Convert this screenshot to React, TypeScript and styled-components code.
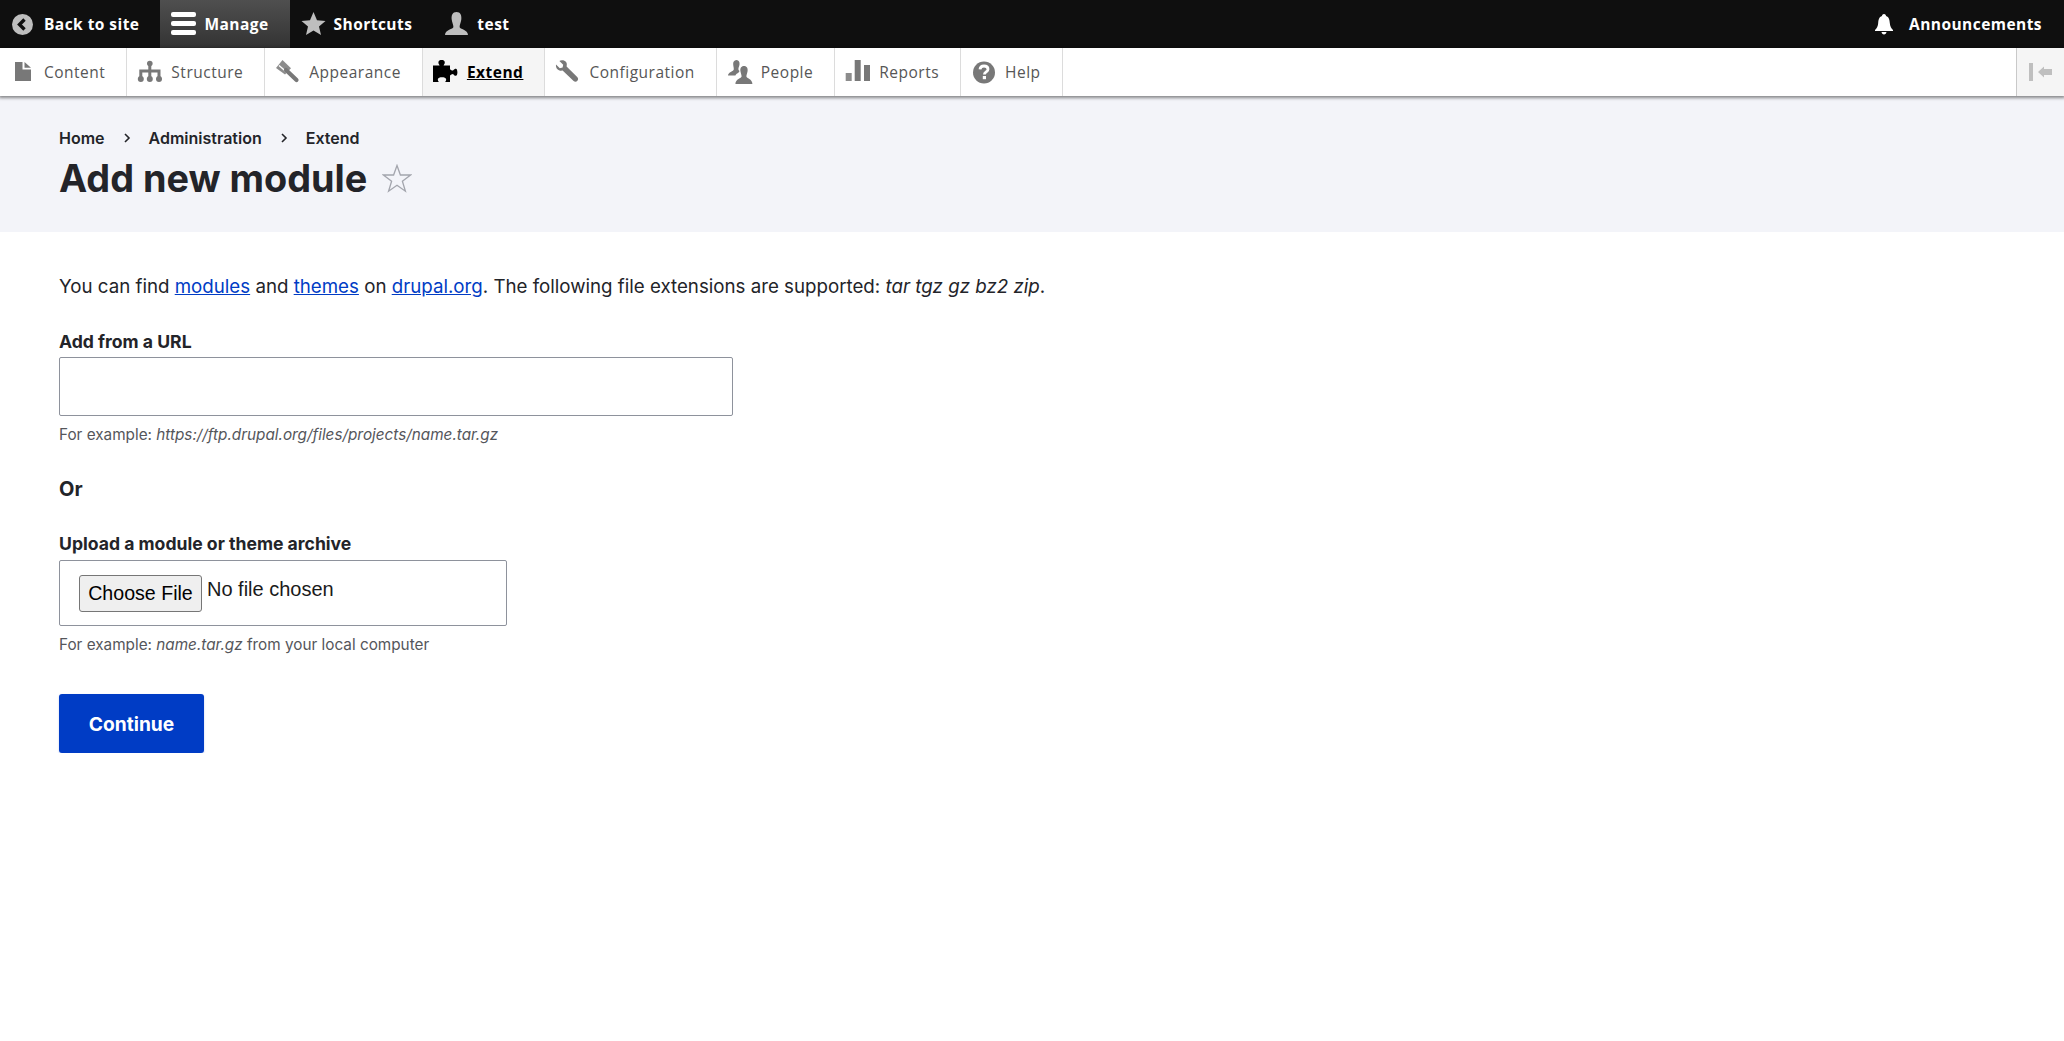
import React from 'react';
import styled, { createGlobalStyle } from 'styled-components';

const GlobalStyle = createGlobalStyle`
  html, body {
    margin: 0;
    padding: 0;
    background: #fff;
  }
  body {
    font-family: Inter, "Liberation Sans", sans-serif;
    color: #232429;
  }
`;

const BackIcon = () => (
  <Icon viewBox="0 0 24 24">
    <circle cx="10.5" cy="12.5" r="10.5" fill="#bebebe" />
    <path d="M12.5 7.5 L7.5 12.5 L12.5 17.5" fill="none" stroke="#0f0f0f" strokeWidth="3.4" />
  </Icon>
);

const ManageIcon = () => (
  <Icon viewBox="0 0 24 24">
    <rect x="-1" y="0" width="25" height="5" rx="2" fill="#fff" />
    <rect x="-1" y="9" width="25" height="5" rx="2" fill="#fff" />
    <rect x="-1" y="18" width="25" height="5" rx="2" fill="#fff" />
  </Icon>
);

const StarIcon = () => (
  <Icon viewBox="0 0 24 24">
    <path d="M11.5 0 L15 8.2 L23.5 8.9 L17 14.6 L19 23 L11.5 18.6 L4 23 L6 14.6 L-0.5 8.9 L8 8.2 Z" fill="#bebebe" />
  </Icon>
);

const UserIcon = () => (
  <Icon viewBox="0 0 24 24">
    <path d="M11.5 0 C15.5 0 16.8 3.5 16.3 7.5 C16 10.5 14.6 12.5 14.6 15 C14.6 17.2 23 17.5 23 23 H0 C0 17.5 8.4 17.2 8.4 15 C8.4 12.5 7 10.5 6.7 7.5 C6.2 3.5 7.5 0 11.5 0 Z" fill="#bebebe" />
  </Icon>
);

const BellIcon = () => (
  <Icon viewBox="0 0 18 24">
    <path d="M9 2 C10.5 2 11 3 11 4 C14 5 14.6 8 14.8 11 C15 14.5 16.4 16.5 18 18 V19 H0 V18 C1.6 16.5 3 14.5 3.2 11 C3.4 8 4 5 7 4 C7 3 7.5 2 9 2 Z" fill="#fff" />
    <path d="M6.5 20 H11.5 C11.3 21.5 10.3 22.4 9 22.4 C7.7 22.4 6.7 21.5 6.5 20 Z" fill="#fff" />
  </Icon>
);

const ContentIcon = () => (
  <Icon viewBox="0 0 24 24">
    <path d="M3 2 H10.5 V9.5 H19 V21 H3 Z" fill="#787878" />
    <path d="M12.5 2 L19 7.8 H12.5 Z" fill="#787878" />
  </Icon>
);

const StructureIcon = () => (
  <Icon viewBox="0 0 24 24">
    <circle cx="10.8" cy="3.5" r="2.8" fill="#787878" />
    <path d="M10.8 4 V19 M1.8 19 V11 H20 V19" fill="none" stroke="#787878" strokeWidth="3" />
    <circle cx="1.8" cy="19" r="3" fill="#787878" />
    <circle cx="10.8" cy="19" r="3" fill="#787878" />
    <circle cx="20" cy="19" r="3" fill="#787878" />
  </Icon>
);

const AppearanceIcon = () => (
  <Icon viewBox="0 0 24 24">
    <path d="M5.5 0 L14 8.2 L8 14.5 L-1 8 Z" fill="#8c8c8c" />
    <path d="M2 5.5 L9.5 12" stroke="#fff" strokeWidth="1.4" />
    <path d="M9 10 L19.5 20" stroke="#787878" strokeWidth="4.2" strokeLinecap="round" />
  </Icon>
);

const ExtendIcon = () => (
  <Icon viewBox="0 0 24 24">
    <path d="M-2 5.5 H4.6 C4.2 4.6 3.4 3.9 3.4 2.6 C3.4 0.6 5 0 6.6 0 C8.2 0 9.8 0.6 9.8 2.6 C9.8 3.9 9 4.6 8.6 5.5 H15 V9.2 C16 9.8 16.6 10.6 18 10.6 C19 9.2 20 8.8 20.8 8.8 C22 8.8 22.4 11 22.4 12.4 C22.4 13.8 22 15.8 20.8 15.8 C20 15.8 19 15.4 18 14 C16.6 14 16 14.8 15 15.4 V22 H10.2 C10.8 20.8 11.2 20.2 11.2 19.4 C11.2 17.8 9 17.2 7 17.2 C5 17.2 2.8 17.8 2.8 19.4 C2.8 20.2 3.2 20.8 3.8 22 H-2 Z" fill="#000" />
  </Icon>
);

const ConfigIcon = () => (
  <Icon viewBox="0 0 24 24">
    <path d="M5 0.3 C3.8 0.3 3 0.7 2.4 1 L6.2 4.8 L5.6 7.6 L2.8 8.2 L-1 4.4 C-1.6 8.6 1.8 11.4 5.6 10.6 L16.6 21 C17.8 22.2 19.4 22 20.4 20.8 C21.4 19.6 21.4 18.2 20.2 17 L9.6 6.4 C10.6 2.6 8.6 0.3 5 0.3 Z" fill="#787878" />
  </Icon>
);

const PeopleIcon = () => (
  <Icon viewBox="0 0 24 24">
    <path d="M7.5 0 C10 0 10.8 2.2 10.5 4.6 C10.2 6.8 9.4 7.6 9.4 9.2 C9.4 10 9.8 10.6 10.6 11 C9.6 12.6 9.2 13 8 13.6 C7.2 14.2 6.6 15 6.4 15.6 H-1 C-1 12 4.8 11.4 4.8 9.2 C4.8 7.6 4.4 6.8 4.2 4.6 C3.9 2.2 5 0 7.5 0 Z" fill="#787878" />
    <path d="M15 6 C18 6 18.9 8.4 18.6 11 C18.3 13.4 17.4 14.6 17.4 16.4 C17.4 18.2 23.4 18.6 23.4 24 H6.4 C6.4 18.6 12.6 18.2 12.6 16.4 C12.6 14.6 11.7 13.4 11.4 11 C11.1 8.4 12 6 15 6 Z" fill="#787878" />
  </Icon>
);

const ReportsIcon = () => (
  <Icon viewBox="0 0 24 24">
    <rect x="-1.3" y="13" width="6" height="8" fill="#8c8c8c" />
    <rect x="7.7" y="0" width="6" height="21" fill="#787878" />
    <rect x="17" y="5" width="6" height="16" fill="#787878" />
  </Icon>
);

const HelpIcon = () => (
  <Icon viewBox="0 0 24 24">
    <circle cx="11" cy="12.5" r="11" fill="#787878" />
    <path d="M7 9.4 C7.2 7 8.8 6 11 6 C13.4 6 15 7.2 15 9.2 C15 11.8 11.4 11.8 11.4 14.4" fill="none" stroke="#fff" strokeWidth="2.8" />
    <rect x="9.8" y="16" width="3.2" height="3.2" fill="#fff" />
  </Icon>
);

const CollapseIcon = () => (
  <svg width="24" height="20" viewBox="0 0 24 20">
    <rect x="0" y="1" width="4" height="18" fill="#bfbfbf" />
    <path d="M9 10 L15 4.5 V7 H23 V13 H15 V15.5 Z" fill="#bfbfbf" />
  </svg>
);

const SmallChevron = () => (
  <svg width="8" height="10" viewBox="0 0 8 10">
    <path d="M2 1 L6 5 L2 9" fill="none" stroke="#232429" strokeWidth="1.6" />
  </svg>
);

const OutlineStar = () => (
  <svg width="30" height="29" viewBox="0 0 30 29">
    <path d="M15 1.5 L18.4 11 L28.6 11 L20.4 17.3 L23.4 27.2 L15 21.2 L6.6 27.2 L9.6 17.3 L1.4 11 L11.6 11 Z" fill="none" stroke="#a3a5ad" strokeWidth="1.3" />
  </svg>
);

export default function App() {
  return (
    <>
      <GlobalStyle />
      <TopBar>
        <TopTab><BackIcon />Back to site</TopTab>
        <TopTab $active><ManageIcon />Manage</TopTab>
        <TopTab><StarIcon />Shortcuts</TopTab>
        <TopTab><UserIcon />test</TopTab>
        <Announce><BellSlot><BellIcon /></BellSlot>Announcements</Announce>
      </TopBar>
      <Tray>
        <TrayTab><ContentIcon />Content</TrayTab>
        <TrayTab><StructureIcon />Structure</TrayTab>
        <TrayTab><AppearanceIcon />Appearance</TrayTab>
        <TrayTab $active><ExtendIcon /><u>Extend</u></TrayTab>
        <TrayTab><ConfigIcon />Configuration</TrayTab>
        <TrayTab><PeopleIcon />People</TrayTab>
        <TrayTab><ReportsIcon />Reports</TrayTab>
        <TrayTab><HelpIcon />Help</TrayTab>
        <Collapse><CollapseIcon /></Collapse>
      </Tray>
      <PageHeader>
        <Crumbs>
          <span>Home</span><SmallChevron />
          <span>Administration</span><SmallChevron />
          <span>Extend</span>
        </Crumbs>
        <TitleRow>
          <Title>Add new module</Title>
          <OutlineStar />
        </TitleRow>
      </PageHeader>
      <Main>
        <Intro>
          You can find <Link href="#">modules</Link> and <Link href="#">themes</Link> on{' '}
          <Link href="#">drupal.org</Link>. The following file extensions are supported:{' '}
          <em>tar tgz gz bz2 zip</em>.
        </Intro>
        <Label htmlFor="url">Add from a URL</Label>
        <TextInput id="url" type="text" />
        <Hint>For example: <em>https://ftp.drupal.org/files/projects/name.tar.gz</em></Hint>
        <OrHeading>Or</OrHeading>
        <Label htmlFor="archive" $top={30}>Upload a module or theme archive</Label>
        <FileBox id="archive" type="file" />
        <Hint>For example: <em>name.tar.gz</em> from your local computer</Hint>
        <Submit type="button">Continue</Submit>
      </Main>
    </>
  );
}

const TopBar = styled.div`
  display: flex;
  height: 48px;
  background: #0f0f0f;
  font-family: "Open Sans", "DejaVu Sans", sans-serif;
  font-weight: 700;
  font-size: 15.5px;
  letter-spacing: 0.45px;
  color: #fff;
`;

const TopTab = styled.div<{ $active?: boolean }>`
  display: flex;
  align-items: center;
  padding: 0 21px 0 12px;
  background: ${p => (p.$active ? 'linear-gradient(#4f4f4f, #333)' : 'none')};
`;

const Announce = styled.div`
  display: flex;
  align-items: center;
  margin-left: auto;
  padding-right: 22px;
`;

const BellSlot = styled.span`
  display: flex;
  margin-right: 16px;
  svg {
    width: 18px;
    margin-right: 0;
  }
`;

const Icon = styled.svg`
  flex: none;
  width: 24px;
  height: 24px;
  margin-right: 8px;
  overflow: visible;
`;

const Tray = styled.div`
  position: relative;
  z-index: 2;
  display: flex;
  height: 48px;
  background: #fff;
  box-shadow: 0 1px 3px 1px rgba(0, 0, 0, 0.45);
  font-family: "Open Sans", "DejaVu Sans", sans-serif;
  font-size: 15.5px;
  letter-spacing: 0.5px;
  color: #565656;
`;

const TrayTab = styled.div<{ $active?: boolean }>`
  display: flex;
  align-items: center;
  padding: 0 21px 0 12px;
  border-right: 1px solid #dcdcdc;
  background: ${p => (p.$active ? '#f5f5f5' : '#fff')};
  color: ${p => (p.$active ? '#000' : 'inherit')};
  font-weight: ${p => (p.$active ? 700 : 400)};
`;

const Collapse = styled.div`
  display: flex;
  align-items: center;
  justify-content: center;
  width: 48px;
  margin-left: auto;
  background: #f5f5f5;
  border-left: 1px solid #c9c9c9;
  box-sizing: border-box;
`;

const PageHeader = styled.header`
  padding: 30px 59px;
  background: #f3f4f9;
`;

const Crumbs = styled.div`
  display: flex;
  align-items: center;
  gap: 18px;
  height: 24px;
  font-size: 16px;
  font-weight: 600;
`;

const TitleRow = styled.div`
  display: flex;
  align-items: center;
  gap: 15px;
  margin-top: 4px;
`;

const Title = styled.h1`
  margin: 0;
  font-size: 37.8px;
  line-height: 48px;
  font-weight: 700;
`;

const Main = styled.main`
  display: flex;
  flex-direction: column;
  align-items: flex-start;
  padding: 40px 59px 0;
`;

const Intro = styled.p`
  margin: 0;
  font-size: 18.72px;
  line-height: 30px;
`;

const Link = styled.a`
  color: #003cc5;
`;

const Label = styled.label<{ $top?: number }>`
  margin-top: ${p => p.$top ?? 28}px;
  font-size: 17.6px;
  line-height: 24px;
  font-weight: 700;
`;

const TextInput = styled.input`
  box-sizing: border-box;
  width: 674px;
  height: 59px;
  margin-top: 3px;
  border: 1px solid #8e929c;
  border-radius: 2px;
  background: #fff;
`;

const Hint = styled.div`
  margin-top: 9px;
  font-size: 15.3px;
  line-height: 20px;
  color: #55565b;
`;

const OrHeading = styled.h2`
  margin: 31px 0 0;
  font-size: 20px;
  line-height: 26px;
  font-weight: 700;
`;

const FileBox = styled.input`
  box-sizing: border-box;
  width: 448px;
  height: 66px;
  margin-top: 4px;
  padding: 14px 19px;
  border: 1px solid #8e929c;
  border-radius: 2px;
  background: #fff;
  font-family: "Liberation Sans", Arial, sans-serif;
  font-size: 20px;
  color: #1a1a1a;

  &::file-selector-button {
    box-sizing: border-box;
    width: 123px;
    height: 37px;
    margin-right: 5px;
    padding: 0;
    border: 1px solid #767676;
    border-radius: 3px;
    background: #efefef;
    font-family: inherit;
    font-size: 19.6px;
    color: #000;
    vertical-align: -4px;
  }
`;

const Submit = styled.button`
  width: 145px;
  height: 59px;
  margin-top: 39px;
  padding: 0;
  border: 0;
  border-radius: 3px;
  background: #003cc5;
  box-shadow: 0 1px 2px rgba(0, 60, 197, 0.25);
  font-family: Inter, "Liberation Sans", sans-serif;
  font-size: 19.2px;
  font-weight: 700;
  color: #fff;
`;
